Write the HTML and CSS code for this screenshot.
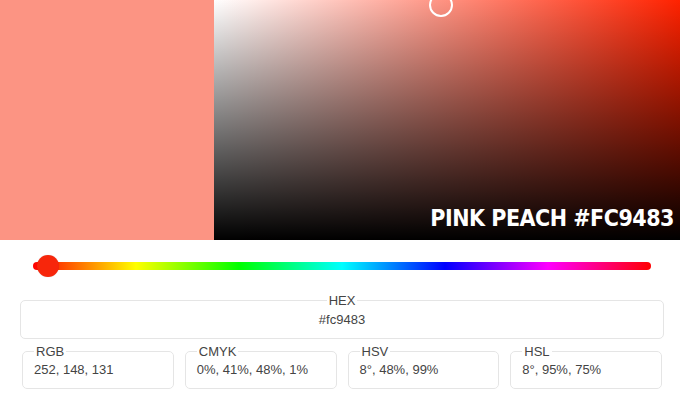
FILE: index.html
```html
<!DOCTYPE html>
<html lang="en">
<head>
  <meta charset="UTF-8">
  <meta name="viewport" content="width=device-width, initial-scale=1.0">
  <title>Pink Peach #FC9483</title>
  <link rel="stylesheet" href="styles.css">
</head>
<body>
  <!-- Swatch + saturation/value panel -->
  <div class="top">
    <div class="swatch"></div>
    <div class="picker">
      <span class="pointer"></span>
      <h1 class="color-name">PINK PEACH #FC9483</h1>
    </div>
  </div>

  <!-- Hue slider -->
  <div class="hue">
    <span class="hue-thumb"></span>
  </div>

  <!-- Color values -->
  <div class="fields">
    <fieldset class="field field-hex">
      <legend>HEX</legend>
      <div class="value">#fc9483</div>
    </fieldset>
    <div class="field-row">
      <fieldset class="field">
        <legend>RGB</legend>
        <div class="value">252, 148, 131</div>
      </fieldset>
      <fieldset class="field">
        <legend>CMYK</legend>
        <div class="value">0%, 41%, 48%, 1%</div>
      </fieldset>
      <fieldset class="field">
        <legend>HSV</legend>
        <div class="value">8°, 48%, 99%</div>
      </fieldset>
      <fieldset class="field">
        <legend>HSL</legend>
        <div class="value">8°, 95%, 75%</div>
      </fieldset>
    </div>
  </div>
</body>
</html>
```

FILE: styles.css
```css
/* Reset */
* {
  margin: 0;
  padding: 0;
  box-sizing: border-box;
}

body {
  width: 680px;
  font-family: 'Liberation Sans', Arial, sans-serif;
  font-size: 13px;
  color: #444;
  background: #fff;
}

/* Top section */
.top {
  display: flex;
  height: 240px;
}

.swatch {
  width: 214px;
  background: #fc9483;
}

.picker {
  flex: 1;
  position: relative;
  display: flex;
  align-items: flex-end;
  justify-content: flex-end;
  padding: 0 6px 10px 0;
  background:
    linear-gradient(to top, #000, rgba(0, 0, 0, 0)),
    linear-gradient(to right, #fff, #ff2200);
}

.pointer {
  position: absolute;
  left: 215px;
  top: -7px;
  width: 24px;
  height: 24px;
  border: 2px solid #fff;
  border-radius: 50%;
}

.color-name {
  font-family: 'Liberation Sans Narrow', 'DejaVu Sans Condensed', sans-serif;
  font-size: 23px;
  font-weight: 700;
  line-height: 1;
  color: #fff;
  letter-spacing: -0.5px;
}

/* Hue slider */
.hue {
  position: relative;
  width: 618px;
  height: 8px;
  margin: 22px 0 0 33px;
  border-radius: 4px;
  background: linear-gradient(to right, #ff0000, #ffff00, #00ff00, #00ffff, #0000ff, #ff00ff, #ff0000);
}

.hue-thumb {
  position: absolute;
  left: 4px;
  top: -7px;
  width: 22px;
  height: 22px;
  border-radius: 50%;
  background: #f7260b;
  box-shadow: 0 0 1px rgba(0, 0, 0, 0.2);
}

/* Fields */
.fields {
  margin: 23px 16px 0 20px;
}

.field {
  min-width: 0;
  border: 1px solid #e5e5e5;
  border-radius: 5px;
  padding: 3px 11px 11px;
}

.field legend {
  padding: 0 2px;
  line-height: 15px;
  color: #444;
}

.field .value {
  line-height: 15px;
}

.field-hex {
  padding-top: 4px;
  text-align: center;
}

.field-hex legend {
  margin: 0 auto;
}

.field-row {
  display: grid;
  grid-template-columns: repeat(4, 1fr);
  gap: 11px;
  margin: 5px 2px 0;
}
```
